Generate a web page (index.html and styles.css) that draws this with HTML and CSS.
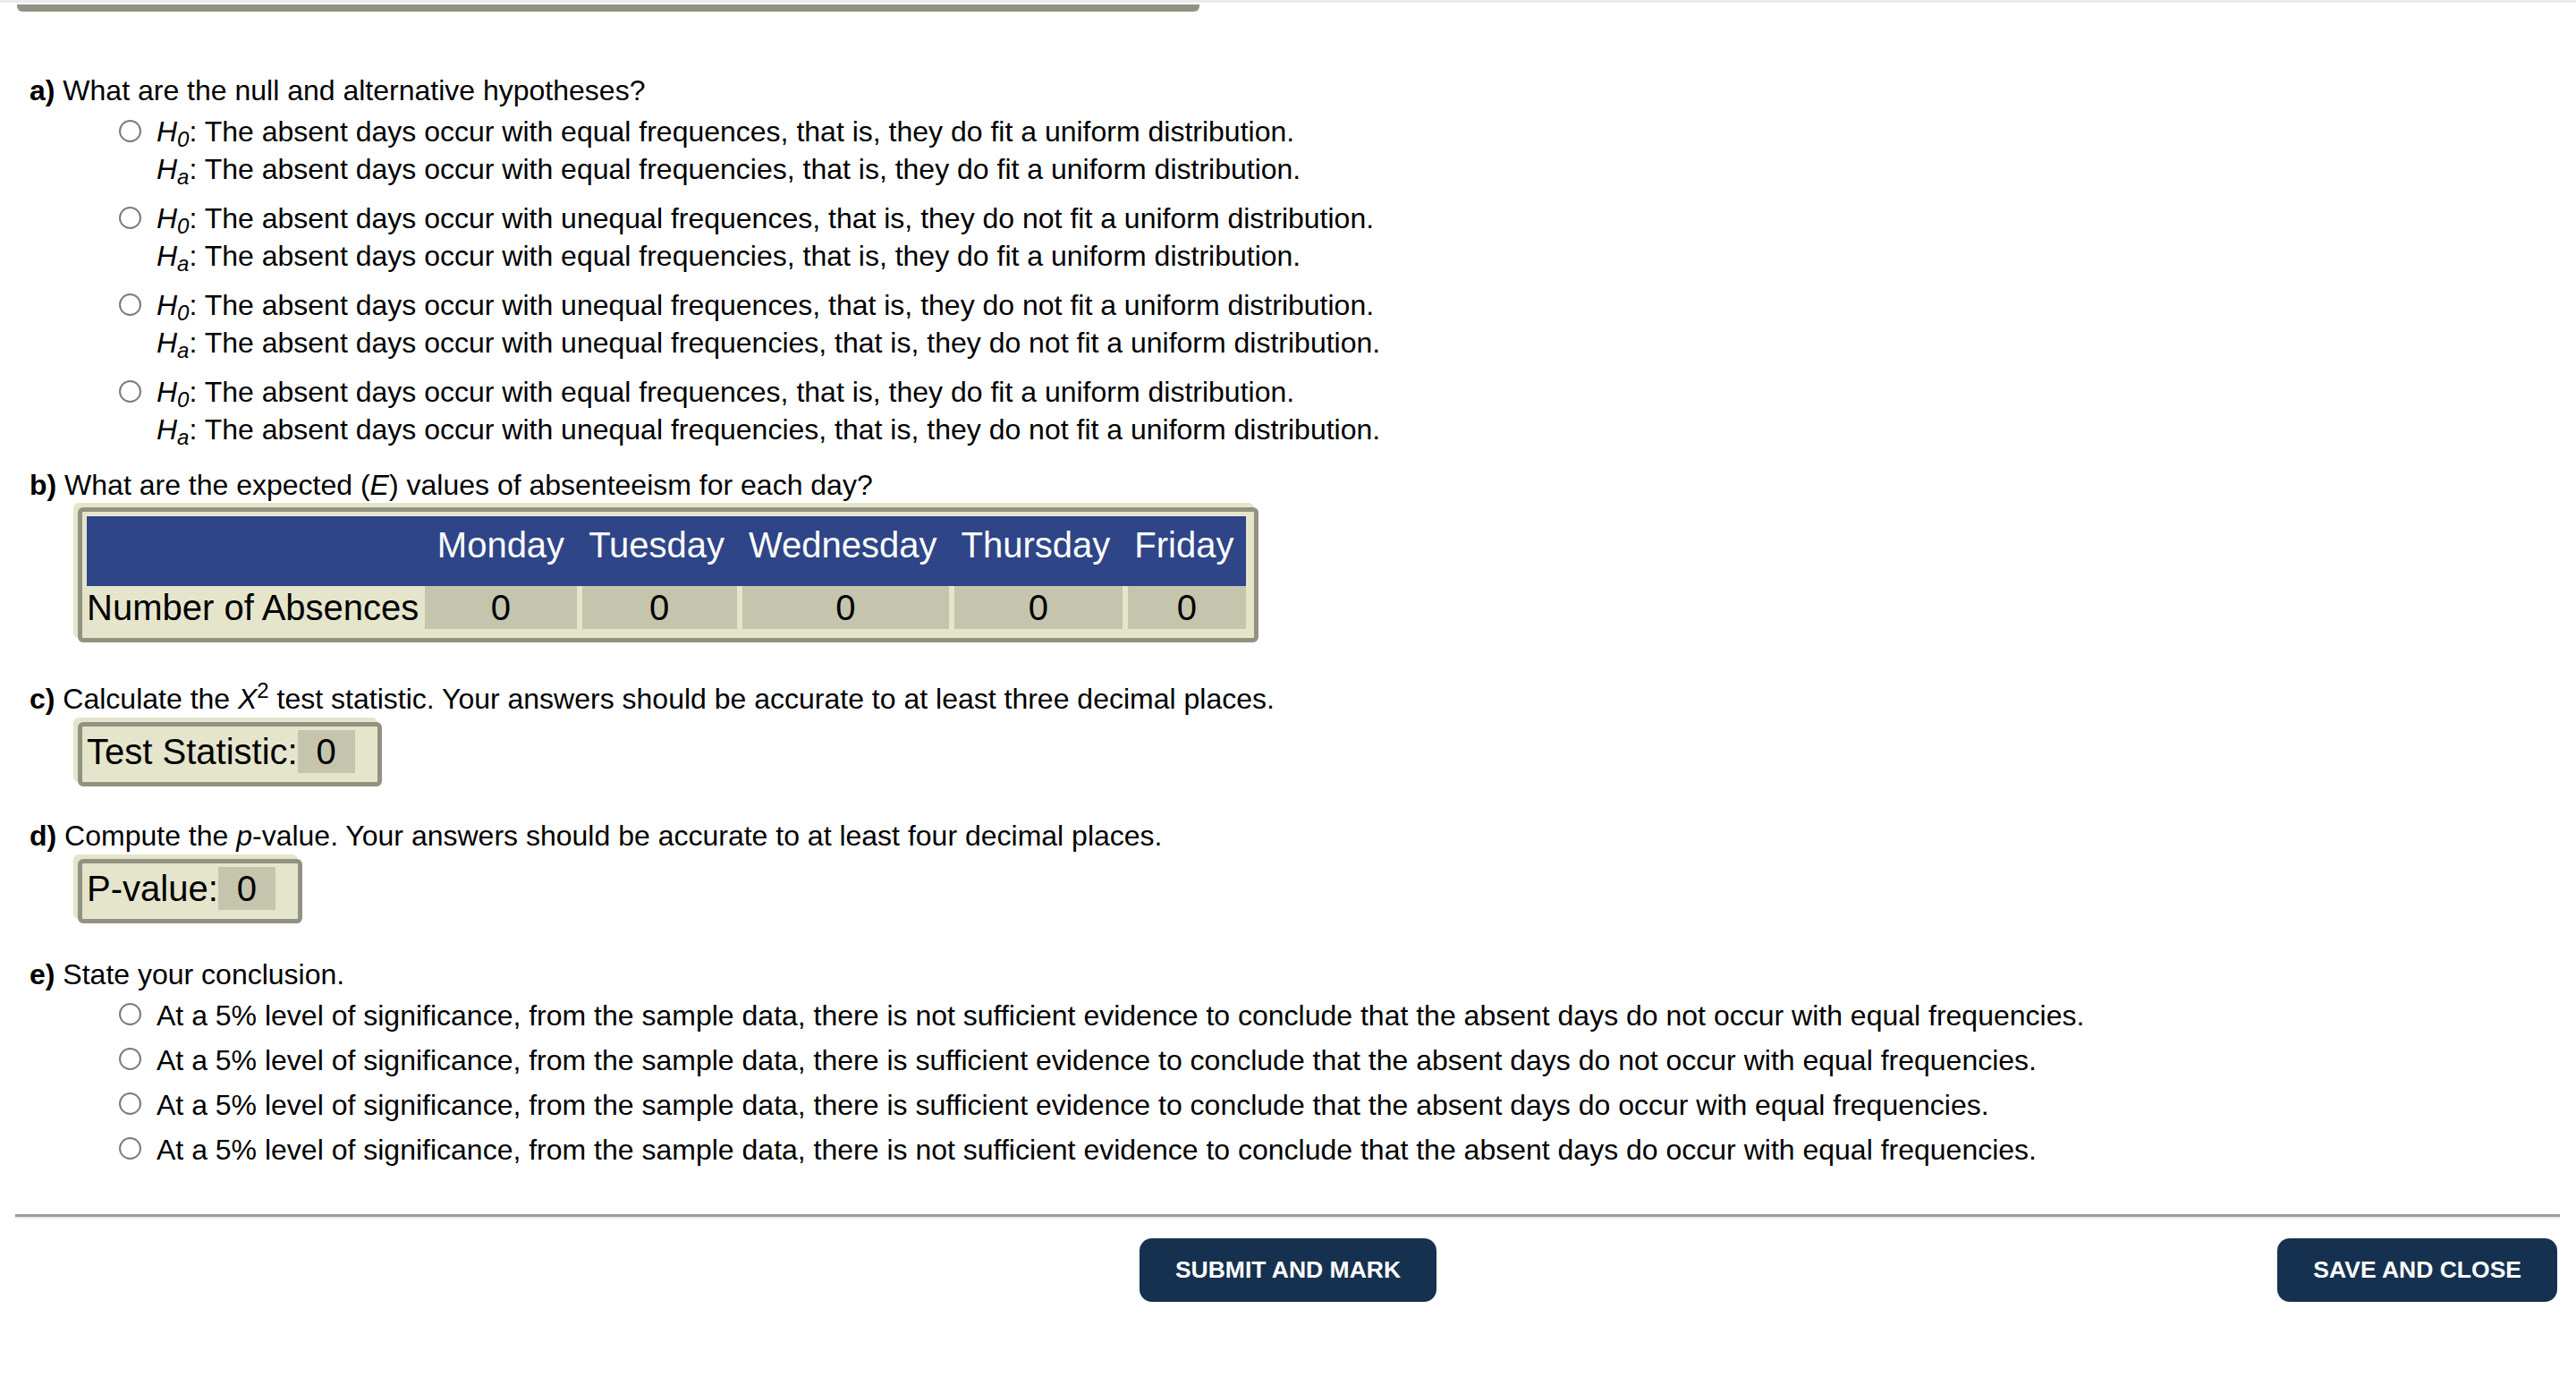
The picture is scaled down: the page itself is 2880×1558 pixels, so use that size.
FILE: index.html
```html
<!DOCTYPE html>
<html lang="en">
<head>
    <meta charset="UTF-8">
    <meta name="viewport" content="width=device-width, initial-scale=1.0">
    <title>Chi-Square Goodness of Fit - Absences</title>
    <link rel="stylesheet" href="styles.css">
</head>
<body>
    <div class="top-line"></div>
    <div class="prev-panel"></div>

    <div class="questions">
        <div class="q q-a"><b>a)</b> What are the null and alternative hypotheses?</div>
        <div class="opt-list hyp-list">
            <label class="opt">
                <input type="radio" name="hyp">
                <span class="opt-text">
                    <span class="line"><i>H<sub>0</sub></i>: The absent days occur with equal frequences, that is, they do fit a uniform distribution.</span>
                    <span class="line"><i>H<sub>a</sub></i>: The absent days occur with equal frequencies, that is, they do fit a uniform distribution.</span>
                </span>
            </label>
            <label class="opt">
                <input type="radio" name="hyp">
                <span class="opt-text">
                    <span class="line"><i>H<sub>0</sub></i>: The absent days occur with unequal frequences, that is, they do not fit a uniform distribution.</span>
                    <span class="line"><i>H<sub>a</sub></i>: The absent days occur with equal frequencies, that is, they do fit a uniform distribution.</span>
                </span>
            </label>
            <label class="opt">
                <input type="radio" name="hyp">
                <span class="opt-text">
                    <span class="line"><i>H<sub>0</sub></i>: The absent days occur with unequal frequences, that is, they do not fit a uniform distribution.</span>
                    <span class="line"><i>H<sub>a</sub></i>: The absent days occur with unequal frequencies, that is, they do not fit a uniform distribution.</span>
                </span>
            </label>
            <label class="opt">
                <input type="radio" name="hyp">
                <span class="opt-text">
                    <span class="line"><i>H<sub>0</sub></i>: The absent days occur with equal frequences, that is, they do fit a uniform distribution.</span>
                    <span class="line"><i>H<sub>a</sub></i>: The absent days occur with unequal frequencies, that is, they do not fit a uniform distribution.</span>
                </span>
            </label>
        </div>

        <div class="q q-b"><b>b)</b> What are the expected (<i>E</i>) values of absenteeism for each day?</div>
        <div class="panel table-panel">
            <table class="exp-table">
                <tr>
                    <th class="corner"></th>
                    <th>Monday</th>
                    <th>Tuesday</th>
                    <th>Wednesday</th>
                    <th>Thursday</th>
                    <th>Friday</th>
                </tr>
                <tr>
                    <td class="row-label">Number of Absences</td>
                    <td class="val">0</td>
                    <td class="val">0</td>
                    <td class="val">0</td>
                    <td class="val">0</td>
                    <td class="val">0</td>
                </tr>
            </table>
        </div>

        <div class="q q-c"><b>c)</b> Calculate the <i>X</i><sup>2</sup> test statistic. Your answers should be accurate to at least three decimal places.</div>
        <div class="panel field-panel">
            <span class="field-label">Test Statistic:</span>
            <span class="field-value">0</span>
        </div>

        <div class="q q-d"><b>d)</b> Compute the <i>p</i>-value. Your answers should be accurate to at least four decimal places.</div>
        <div class="panel field-panel">
            <span class="field-label">P-value:</span>
            <span class="field-value">0</span>
        </div>

        <div class="q q-e"><b>e)</b> State your conclusion.</div>
        <div class="opt-list concl-list">
            <label class="opt">
                <input type="radio" name="concl">
                <span class="opt-text"><span class="line">At a 5% level of significance, from the sample data, there is not sufficient evidence to conclude that the absent days do not occur with equal frequencies.</span></span>
            </label>
            <label class="opt">
                <input type="radio" name="concl">
                <span class="opt-text"><span class="line">At a 5% level of significance, from the sample data, there is sufficient evidence to conclude that the absent days do not occur with equal frequencies.</span></span>
            </label>
            <label class="opt">
                <input type="radio" name="concl">
                <span class="opt-text"><span class="line">At a 5% level of significance, from the sample data, there is sufficient evidence to conclude that the absent days do occur with equal frequencies.</span></span>
            </label>
            <label class="opt">
                <input type="radio" name="concl">
                <span class="opt-text"><span class="line">At a 5% level of significance, from the sample data, there is not sufficient evidence to conclude that the absent days do occur with equal frequencies.</span></span>
            </label>
        </div>
    </div>

    <hr class="divider">

    <div class="actions">
        <span></span>
        <button type="button" class="btn">SUBMIT AND MARK</button>
        <button type="button" class="btn btn-save">SAVE AND CLOSE</button>
    </div>
</body>
</html>
```

FILE: styles.css
```css
* {
    box-sizing: border-box;
}

body {
    margin: 0;
    font-family: "Liberation Sans", Arial, Helvetica, sans-serif;
    font-size: 32px;
    color: #000;
    background: #fff;
}

.top-line {
    height: 3px;
    background: #ebe9f0;
}

.prev-panel {
    margin: 2px 0 0 19px;
    width: 1322px;
    height: 8px;
    background: #929282;
    border-radius: 0 0 6px 6px;
}

.questions {
    padding: 0 33px;
}

.q {
    line-height: 42px;
    white-space: nowrap;
}

.q-a { margin-top: 67px; }
.q-b { margin-top: 20px; }
.q-c { margin-top: 42px; }
.q-d { margin-top: 34px; }
.q-e { margin-top: 36px; }

sub {
    font-size: 24px;
    line-height: 0;
    vertical-align: -6px;
}

sup {
    font-size: 24px;
    line-height: 0;
    vertical-align: 12px;
}

/* radio option lists */
.opt-list {
    display: flex;
    flex-direction: column;
    gap: 13px;
    margin-left: 100px;
}

.hyp-list { padding-top: 4px; }
.concl-list { padding-top: 7px; }

.opt {
    display: flex;
    align-items: flex-start;
    gap: 17px;
}

.opt input {
    appearance: none;
    -webkit-appearance: none;
    flex-shrink: 0;
    width: 25px;
    height: 25px;
    margin: 8px 0 0 0;
    border: 2px solid #7b7b7b;
    border-radius: 50%;
    background: #fff;
}

.opt-text .line {
    display: block;
    line-height: 42px;
    white-space: nowrap;
}

.concl-list .opt-text .line {
    line-height: 37px;
}

.concl-list .opt input {
    margin-top: 4px;
}

/* beige answer panels */
.panel {
    width: fit-content;
    margin-left: 54px;
    background: #e5e5cc;
    border: 5px solid #929282;
    border-radius: 6px;
    box-shadow: -5px -5px 0 #e5e5cc;
}

.table-panel {
    margin-top: 4px;
    padding: 5px 9px 10px 5px;
}

.exp-table {
    border-collapse: separate;
    border-spacing: 0;
    font-size: 40px;
}

.exp-table th {
    background: #2e4587;
    color: #fff;
    font-weight: normal;
    line-height: 46px;
    padding: 9px 13.5px 23px;
    white-space: nowrap;
}

.exp-table td {
    height: 48px;
    line-height: 48px;
    padding: 0;
}

.exp-table .row-label {
    padding-right: 7px;
    white-space: nowrap;
}

.val {
    background: #c5c5ad;
    background-clip: padding-box;
    text-align: center;
}

.val + .val {
    border-left: 6px solid transparent;
}

.field-panel {
    display: flex;
    align-items: center;
    margin-top: 5px;
    padding: 4px 25px 10px 5px;
    font-size: 40px;
}

.field-value {
    width: 64px;
    height: 48px;
    line-height: 48px;
    text-align: center;
    background: #c5c5ad;
}

/* footer */
.divider {
    margin: 53px 18px 0 17px;
    border: 0;
    border-top: 3px solid #9c9c9c;
    border-bottom: 2px solid #ececec;
    height: 0;
}

.actions {
    display: grid;
    grid-template-columns: 1fr auto 1fr;
    align-items: center;
    margin-top: 22px;
}

.btn {
    height: 71px;
    padding: 0 40px;
    border: none;
    border-radius: 14px;
    background: #163150;
    color: #fff;
    font-family: "Liberation Sans", Arial, Helvetica, sans-serif;
    font-size: 26.5px;
    font-weight: bold;
    cursor: pointer;
}

.btn-save {
    justify-self: end;
    margin-right: 21px;
}
```
